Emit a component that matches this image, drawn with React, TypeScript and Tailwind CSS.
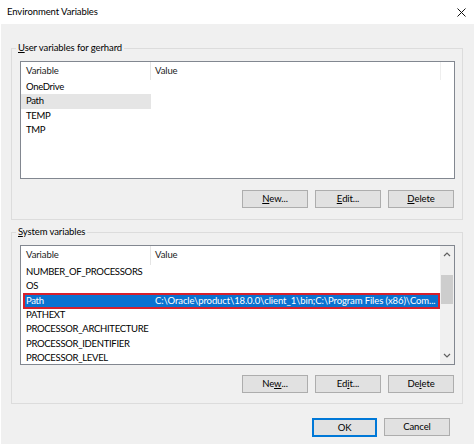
import React from "react";

type Row = { name: string; value?: string; selected?: "gray" | "blue" };

const userRows: Row[] = [
  { name: "OneDrive" },
  { name: "Path", selected: "gray" },
  { name: "TEMP" },
  { name: "TMP" },
];

const systemRows: Row[] = [
  { name: "NUMBER_OF_PROCESSORS" },
  { name: "OS" },
  {
    name: "Path",
    value: "C:\\Oracle\\product\\18.0.0\\client_1\\bin;C:\\Program Files (x86)\\Com...",
    selected: "blue",
  },
  { name: "PATHEXT" },
  { name: "PROCESSOR_ARCHITECTURE" },
  { name: "PROCESSOR_IDENTIFIER" },
  { name: "PROCESSOR_LEVEL" },
];

function Btn({ children, primary }: { children: React.ReactNode; primary?: boolean }) {
  return (
    <div
      className={
        "flex items-center justify-center bg-[#e1e1e1] text-[9.5px] leading-none text-black " +
        (primary ? "border-2 border-[#0078d7] h-[19px] w-[65px]" : "border border-[#adadad] w-[66px] h-[18px]")
      }
    >
      {children}
    </div>
  );
}

function Chevron({ up }: { up?: boolean }) {
  return (
    <svg width="8" height="5" viewBox="0 0 8 5" className="text-[#606060]">
      <path
        d={up ? "M1 4 L4 1 L7 4" : "M1 1 L4 4 L7 1"}
        fill="none"
        stroke="currentColor"
        strokeWidth="1.2"
      />
    </svg>
  );
}

function ListBox({
  rows,
  height,
  headerH,
  scroll,
}: {
  rows: Row[];
  height: number;
  headerH: string;
  scroll?: boolean;
}) {
  return (
    <div
      className="ml-[8px] w-[435px] border border-[#828790] bg-white flex overflow-hidden"
      style={{ height }}
    >
      <div className="flex-1 flex flex-col overflow-hidden">
        <div className={"flex text-[9.5px] text-[#222] shrink-0 " + headerH}>
          <div className="w-[130px] pl-[5px] flex items-center border-r border-[#e5e5e5]">Variable</div>
          <div className="flex-1 pl-[4px] flex items-center">Value</div>
          {!scroll && <div className="w-[14px] border-l border-[#eeeeee]" />}
        </div>
        {rows.map((r, i) => (
          <div key={i} className="relative flex h-[14.35px] shrink-0 text-[9.5px] leading-[14px]">
            {r.selected === "blue" && (
              <span className="absolute left-[2px] right-0 -top-[1px] -bottom-[1px] border-2 border-[#d7202b] bg-[#0a72d0]" />
            )}
            <div
              className={
                "relative w-[130px] pl-[5px] whitespace-nowrap tracking-[-0.3px] " +
                (r.selected === "gray" ? "bg-[#e5e5e5]" : "") +
                (r.selected === "blue" ? " text-white" : " text-black")
              }
            >
              {r.name}
            </div>
            <div className="relative flex-1 pl-[4px] whitespace-nowrap overflow-hidden text-white">
              {r.value}
            </div>
          </div>
        ))}
      </div>
      {scroll && (
        <div className="w-[14px] bg-[#f0f0f0] flex flex-col shrink-0">
          <div className="h-[17px] flex items-center justify-center">
            <Chevron up />
          </div>
          <div className="flex-1 flex flex-col">
            <div className="h-[12px]" />
            <div className="h-[29px] mx-[1px] bg-[#cdcdcd]" />
          </div>
          <div className="h-[17px] flex items-center justify-center">
            <Chevron />
          </div>
        </div>
      )}
    </div>
  );
}

function Group({ label, children, className }: { label: React.ReactNode; children: React.ReactNode; className?: string }) {
  return (
    <fieldset className={"w-[452px] border border-[#dcdcdc] " + (className ?? "")}>
      <legend className="ml-[4px] px-[2px] text-[9.5px] leading-[16px] text-black">{label}</legend>
      {children}
    </fieldset>
  );
}

export default function App() {
  return (
    <div
      className="w-[474px] h-[448px] bg-white flex flex-col overflow-hidden tracking-[-0.1px]"
      style={{ fontFamily: 'Lato, "Noto Sans", sans-serif' }}
    >
      {/* Title bar */}
      <div className="h-[24px] shrink-0 flex items-center justify-between pl-[7px] pr-[8px]">
        <span className="text-[9.5px] text-black">Environment Variables</span>
        <svg width="9" height="9" viewBox="0 0 9 9">
          <path d="M0.5 0.5 L8.5 8.5 M8.5 0.5 L0.5 8.5" stroke="#111" strokeWidth="1" />
        </svg>
      </div>

      {/* Body */}
      <div className="flex-1 ml-[1px] mb-[4px] bg-[#f0f0f0] pl-[10px] flex flex-col">
        <Group
          className="mt-[16px] pt-[5px] pb-[11px]"
          label={
            <>
              <span className="underline">U</span>ser variables for gerhard
            </>
          }
        >
          <ListBox rows={userRows} height={118} headerH="h-[18px]" />
          <div className="mt-[11px] flex justify-end gap-[7px] pr-[8px]">
            <Btn>
              <span className="underline">N</span>ew...
            </Btn>
            <Btn>
              <span className="underline">E</span>dit...
            </Btn>
            <Btn>
              <span className="underline">D</span>elete
            </Btn>
          </div>
        </Group>

        <Group
          className="mt-[4px] pt-[5px] pb-[10px]"
          label={
            <>
              <span className="underline">S</span>ystem variables
            </>
          }
        >
          <ListBox rows={systemRows} height={120} headerH="h-[19px]" scroll />
          <div className="mt-[10px] flex justify-end gap-[7px] pr-[8px]">
            <Btn>
              Ne<span className="underline">w</span>...
            </Btn>
            <Btn>
              Ed<span className="underline">i</span>t...
            </Btn>
            <Btn>
              De<span className="underline">l</span>ete
            </Btn>
          </div>
        </Group>

        <div className="mt-[14px] flex justify-end gap-[7px] pr-[24px]">
          <Btn primary>OK</Btn>
          <Btn>Cancel</Btn>
        </div>
      </div>
    </div>
  );
}
